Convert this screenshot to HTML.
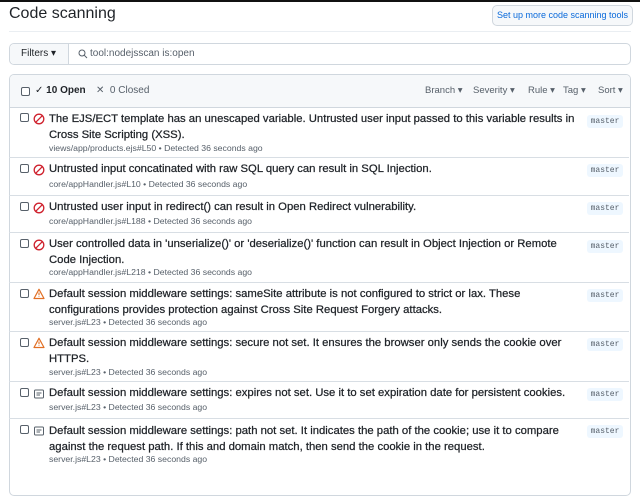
<!DOCTYPE html>
<html><head><meta charset="utf-8"><style>
body{margin:0;width:640px;height:466px;overflow:hidden;background:#fff;font-family:"Liberation Sans",sans-serif;color:#1f2328;position:relative}
.topbar{position:absolute;left:0;top:0;width:640px;height:2px;background:#111}
h1{position:absolute;left:9px;top:5px;margin:0;font-size:16px;font-weight:normal;color:#1f2328}
.btn{position:absolute;left:492px;top:5px;width:139px;height:19px;border:1px solid #d0d7de;border-radius:5px;background:#f6f8fa;font-size:9px;color:#0969da;line-height:19px;text-align:center}
.sep{position:absolute;left:9px;top:31px;width:622px;height:1px;background:#eaeef2}
.filter{position:absolute;left:9px;top:43px;width:620px;height:20px;border:1px solid #d0d7de;border-radius:5px;font-size:10px;line-height:20px}
.filter .f{position:absolute;left:0;top:0;width:59px;height:20px;background:#f6f8fa;border-right:1px solid #d0d7de;border-radius:5px 0 0 5px;padding-left:11px;box-sizing:border-box;color:#1f2328}
.filter .q{position:absolute;left:80px;color:#57606a}
.list{position:absolute;left:9px;top:74px;width:620px;height:420px;border:1px solid #d0d7de;border-radius:5px;overflow:hidden}
.hdr{height:32px;background:#f6f8fa;border-bottom:1px solid #d0d7de;font-size:10px;line-height:32px;position:relative}
.hdr .s{position:absolute;color:#57606a;font-size:9.5px}
.cb{position:absolute;width:7px;height:7px;border:1px solid #57606a;border-radius:2px;background:#fff}
.row{position:absolute;left:0;width:620px;border-bottom:1px solid #d8dee4}
.t{position:absolute;left:40px;font-size:11.3px;line-height:15.5px;white-space:nowrap;-webkit-text-stroke:0.25px #1f2328}
.m{position:absolute;left:40px;font-size:8.7px;color:#57606a;white-space:nowrap}
.b{position:absolute;left:578px;width:36px;height:13px;background:#eef7ff;border-radius:3px;font-family:"Liberation Mono",monospace;font-size:8px;color:#57606a;line-height:13px;text-align:center}
.ic{position:absolute;left:24px}
</style></head><body>
<div class="topbar"></div>
<h1>Code scanning</h1>
<div class="btn">Set up more code scanning tools</div>
<div class="sep"></div>
<div class="filter"><div class="f">Filters ▾</div>
<svg style="position:absolute;left:68px;top:5px" width="10" height="10" viewBox="0 0 10 10"><circle cx="4" cy="4" r="3" fill="none" stroke="#57606a" stroke-width="1"/><path d="M6.2 6.2L9 9" stroke="#57606a"/></svg>
<span class="q">tool:nodejsscan is:open</span></div>
<div class="list">
<div class="hdr"><div class="cb" style="left:11px;top:12px"></div>
<span style="position:absolute;left:25px">✓ <b>10 Open</b></span>
<span style="position:absolute;left:86px;color:#57606a">✕ &nbsp;0 Closed</span>
<span class="s" style="left:415px">Branch ▾</span>
<span class="s" style="left:463px">Severity ▾</span>
<span class="s" style="left:518px">Rule ▾</span>
<span class="s" style="left:553px">Tag ▾</span>
<span class="s" style="left:588px">Sort ▾</span></div>
</div>
<div style="position:absolute;left:9px;top:0;width:620px">
<div class="row" style="top:107px;height:50px"><div class="cb" style="left:11px;top:6px"></div>
<svg class="ic" style="top:6px" width="12" height="12" viewBox="0 0 12 12"><circle cx="6" cy="6" r="4.8" fill="none" stroke="#cf222e" stroke-width="1.3"/><path d="M2.7 9.3L9.3 2.7" stroke="#cf222e" stroke-width="1.3"/></svg>
<div class="t" style="top:5px">The EJS/ECT template has an unescaped variable. Untrusted user input passed to this variable results in<br>Cross Site Scripting (XSS).</div>
<div class="m" style="top:36px">views/app/products.ejs#L50 • Detected 36 seconds ago</div><div class="b" style="top:8px">master</div></div>

<div class="row" style="top:158px;height:37px"><div class="cb" style="left:11px;top:6px"></div>
<svg class="ic" style="top:6px" width="12" height="12" viewBox="0 0 12 12"><circle cx="6" cy="6" r="4.8" fill="none" stroke="#cf222e" stroke-width="1.3"/><path d="M2.7 9.3L9.3 2.7" stroke="#cf222e" stroke-width="1.3"/></svg>
<div class="t" style="top:4px">Untrusted input concatinated with raw SQL query can result in SQL Injection.</div>
<div class="m" style="top:21px">core/appHandler.js#L10 • Detected 36 seconds ago</div><div class="b" style="top:6px">master</div></div>

<div class="row" style="top:196px;height:36px"><div class="cb" style="left:11px;top:6px"></div>
<svg class="ic" style="top:6px" width="12" height="12" viewBox="0 0 12 12"><circle cx="6" cy="6" r="4.8" fill="none" stroke="#cf222e" stroke-width="1.3"/><path d="M2.7 9.3L9.3 2.7" stroke="#cf222e" stroke-width="1.3"/></svg>
<div class="t" style="top:4px">Untrusted user input in redirect() can result in Open Redirect vulnerability.</div>
<div class="m" style="top:20px">core/appHandler.js#L188 • Detected 36 seconds ago</div><div class="b" style="top:6px">master</div></div>

<div class="row" style="top:233px;height:49px"><div class="cb" style="left:11px;top:6px"></div>
<svg class="ic" style="top:6px" width="12" height="12" viewBox="0 0 12 12"><circle cx="6" cy="6" r="4.8" fill="none" stroke="#cf222e" stroke-width="1.3"/><path d="M2.7 9.3L9.3 2.7" stroke="#cf222e" stroke-width="1.3"/></svg>
<div class="t" style="top:4px">User controlled data in 'unserialize()' or 'deserialize()' function can result in Object Injection or Remote<br>Code Injection.</div>
<div class="m" style="top:34px">core/appHandler.js#L218 • Detected 36 seconds ago</div><div class="b" style="top:7px">master</div></div>

<div class="row" style="top:283px;height:48px"><div class="cb" style="left:11px;top:6px"></div>
<svg class="ic" style="top:5px" width="12" height="12" viewBox="0 0 12 12"><path d="M6 1.3L11 10.5H1Z" fill="none" stroke="#e16f24" stroke-width="1.2" stroke-linejoin="round"/><path d="M6 4.5V7.3M6 8.4V9" stroke="#e16f24" stroke-width="1.1"/></svg>
<div class="t" style="top:4px">Default session middleware settings: sameSite attribute is not configured to strict or lax. These<br>configurations provides protection against Cross Site Request Forgery attacks.</div>
<div class="m" style="top:34px">server.js#L23 • Detected 36 seconds ago</div><div class="b" style="top:6px">master</div></div>

<div class="row" style="top:332px;height:49px"><div class="cb" style="left:11px;top:6px"></div>
<svg class="ic" style="top:5px" width="12" height="12" viewBox="0 0 12 12"><path d="M6 1.3L11 10.5H1Z" fill="none" stroke="#e16f24" stroke-width="1.2" stroke-linejoin="round"/><path d="M6 4.5V7.3M6 8.4V9" stroke="#e16f24" stroke-width="1.1"/></svg>
<div class="t" style="top:4px">Default session middleware settings: secure not set. It ensures the browser only sends the cookie over<br>HTTPS.</div>
<div class="m" style="top:35px">server.js#L23 • Detected 36 seconds ago</div><div class="b" style="top:6px">master</div></div>

<div class="row" style="top:382px;height:36px"><div class="cb" style="left:11px;top:6px"></div>
<svg class="ic" style="top:6px" width="12" height="12" viewBox="0 0 12 12"><rect x="1.5" y="2" width="9" height="8" rx="1" fill="none" stroke="#57606a"/><path d="M3.5 5H8.5M3.5 7H7" stroke="#57606a"/></svg>
<div class="t" style="top:4px">Default session middleware settings: expires not set. Use it to set expiration date for persistent cookies.</div>
<div class="m" style="top:20px">server.js#L23 • Detected 36 seconds ago</div><div class="b" style="top:6px">master</div></div>

<div class="row" style="top:419px;height:60px;border:none"><div class="cb" style="left:11px;top:6px"></div>
<svg class="ic" style="top:6px" width="12" height="12" viewBox="0 0 12 12"><rect x="1.5" y="2" width="9" height="8" rx="1" fill="none" stroke="#57606a"/><path d="M3.5 5H8.5M3.5 7H7" stroke="#57606a"/></svg>
<div class="t" style="top:5px">Default session middleware settings: path not set. It indicates the path of the cookie; use it to compare<br>against the request path. If this and domain match, then send the cookie in the request.</div>
<div class="m" style="top:35px">server.js#L23 • Detected 36 seconds ago</div><div class="b" style="top:6px">master</div></div>
</div>
</body></html>
